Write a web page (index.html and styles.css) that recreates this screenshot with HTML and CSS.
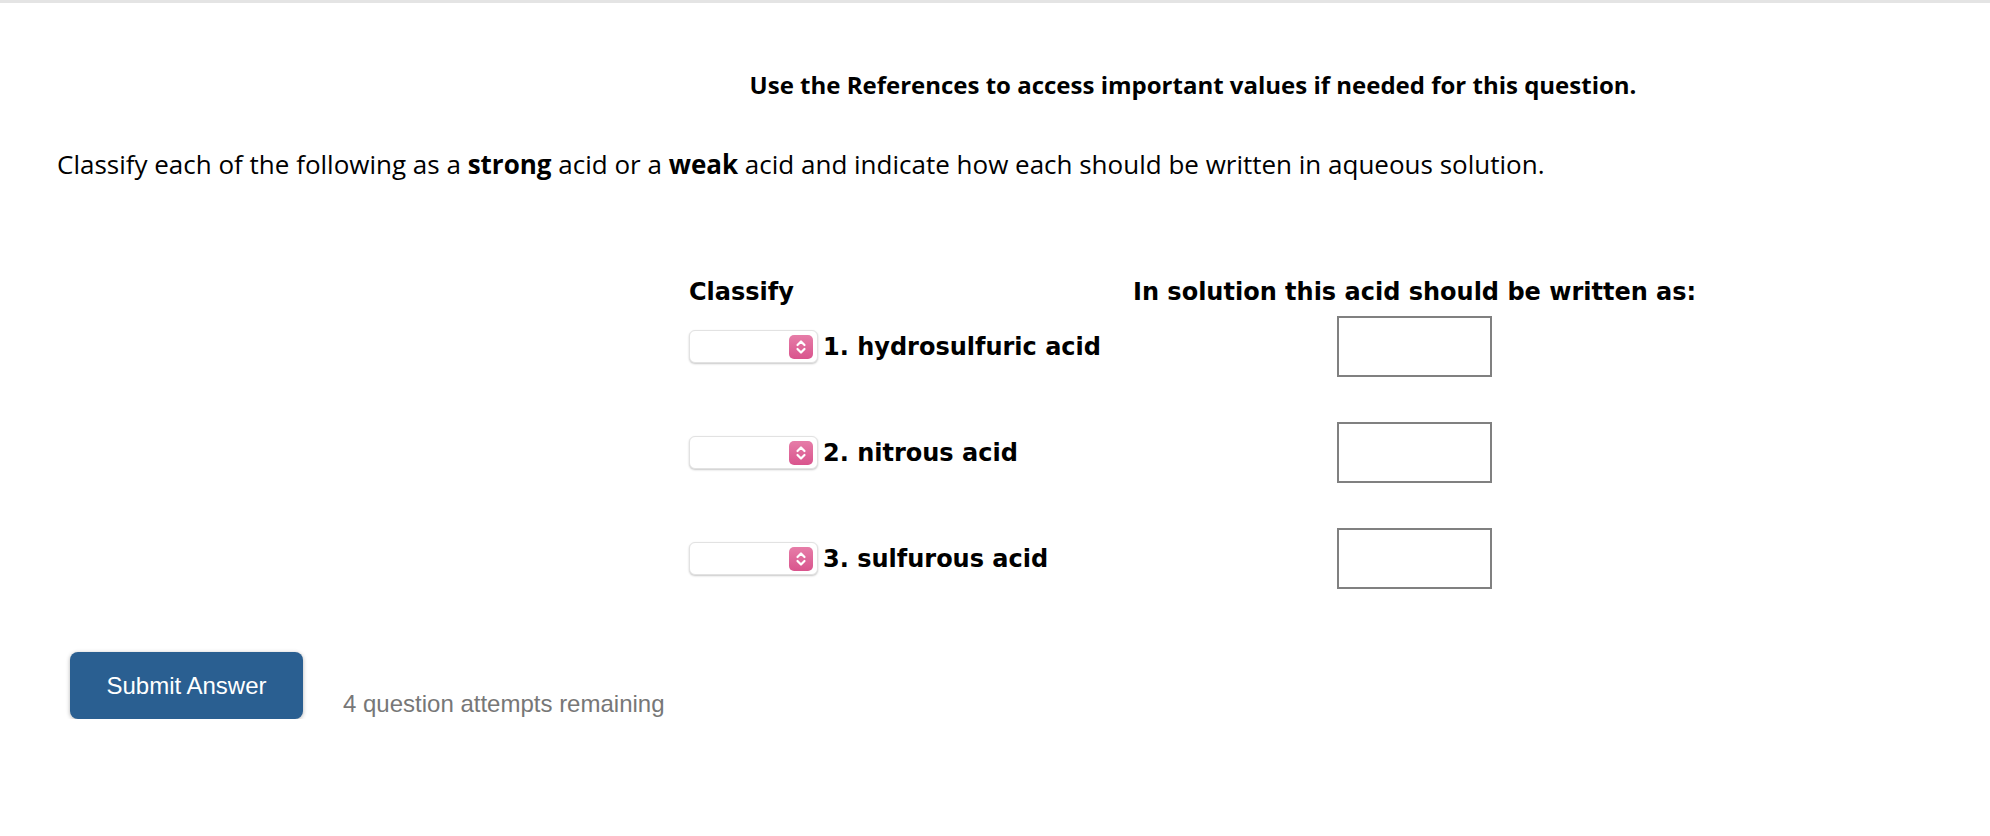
FILE: index.html
```html
<!DOCTYPE html>
<html lang="en">
<head>
    <meta charset="UTF-8">
    <meta name="viewport" content="width=device-width, initial-scale=1.0">
    <title>Strong and Weak Acids</title>
    <link rel="stylesheet" href="styles.css">
</head>
<body>
    <div class="page">
        <p class="refs">Use the References to access important values if needed for this question.</p>
        <p class="prompt">Classify each of the following as a <b>strong</b> acid or a <b>weak</b> acid and indicate how each should be written in aqueous solution.</p>

        <div class="question">
            <div class="col-head">Classify</div>
            <div class="col-head answer">In solution this acid should be written as:</div>

            <div class="item">
                <div class="select"><span class="stepper"><svg viewBox="0 0 24 24"><path d="M8.5 10l3.5-3.5 3.5 3.5M8.5 14l3.5 3.5 3.5-3.5"/></svg></span></div>
                <span class="label">1. hydrosulfuric acid</span>
            </div>
            <div class="answer"><div class="answer-box"></div></div>

            <div class="item">
                <div class="select"><span class="stepper"><svg viewBox="0 0 24 24"><path d="M8.5 10l3.5-3.5 3.5 3.5M8.5 14l3.5 3.5 3.5-3.5"/></svg></span></div>
                <span class="label">2. nitrous acid</span>
            </div>
            <div class="answer"><div class="answer-box"></div></div>

            <div class="item">
                <div class="select"><span class="stepper"><svg viewBox="0 0 24 24"><path d="M8.5 10l3.5-3.5 3.5 3.5M8.5 14l3.5 3.5 3.5-3.5"/></svg></span></div>
                <span class="label">3. sulfurous acid</span>
            </div>
            <div class="answer"><div class="answer-box"></div></div>
        </div>

        <div class="footer">
            <button class="submit">Submit Answer</button>
            <span class="attempts">4 question attempts remaining</span>
        </div>
    </div>
</body>
</html>
```

FILE: styles.css
```css
body {
    margin: 0;
    background: #fff;
    color: #000;
}

.page {
    border-top: 3px solid #e4e4e4;
}

.refs {
    margin: 67px 0 0 396px;
    font-family: "Open Sans", sans-serif;
    font-weight: 700;
    font-size: 24px;
    line-height: 30px;
    text-align: center;
}

.prompt {
    margin: 49px 0 0 57px;
    font-family: "Open Sans", sans-serif;
    font-size: 26px;
    line-height: 30px;
}

.prompt b {
    font-weight: 700;
}

.question {
    display: grid;
    grid-template-columns: 444px auto;
    justify-content: start;
    align-items: center;
    row-gap: 45px;
    margin: 92px 0 0 689px;
    font-family: "DejaVu Sans", Verdana, sans-serif;
    font-weight: 700;
    font-size: 24px;
}

.col-head {
    line-height: 24px;
    margin-bottom: -41px;
}

.answer {
    text-align: center;
}

.item {
    display: flex;
    align-items: center;
    gap: 5px;
}

.select {
    width: 129px;
    height: 33px;
    box-sizing: border-box;
    border: 1px solid #e2e2e2;
    border-radius: 6px;
    background: #fff;
    box-shadow: 0 1px 2px rgba(0, 0, 0, 0.22);
    display: flex;
    align-items: center;
    justify-content: flex-end;
    padding-right: 4px;
}

.stepper {
    width: 24px;
    height: 24px;
    border-radius: 5px;
    background: linear-gradient(#e67da8, #d9548d);
    display: flex;
}

.stepper svg {
    width: 24px;
    height: 24px;
    fill: none;
    stroke: #fff;
    stroke-width: 2.2;
    stroke-linecap: round;
    stroke-linejoin: round;
}

.answer-box {
    display: inline-block;
    vertical-align: middle;
    width: 155px;
    height: 61px;
    box-sizing: border-box;
    border: 2px solid #808080;
    background: #fff;
}

.footer {
    display: flex;
    align-items: flex-end;
    gap: 40px;
    margin: 63px 0 0 70px;
}

.submit {
    width: 233px;
    height: 67px;
    border: none;
    border-radius: 8px;
    background: #2a5f91;
    color: #fff;
    font-family: "Liberation Sans", Arial, sans-serif;
    font-size: 24px;
    box-shadow: 0 1px 4px rgba(0, 0, 0, 0.3);
}

.attempts {
    font-family: "Liberation Sans", Arial, sans-serif;
    font-size: 24px;
    line-height: 30px;
    color: #777;
}
```
